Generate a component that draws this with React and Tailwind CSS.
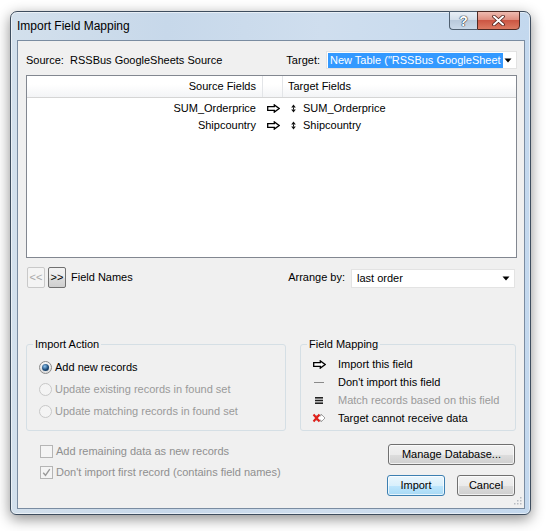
import React from 'react';

const ui = "font-['Liberation_Sans',Arial,sans-serif]";

const MapArrow = ({ stroke = '#000' }) => (
  <svg width="13" height="9" viewBox="0 0 13 9">
    <path d="M0.7 2.7H7.3V0.9L12.2 4.5L7.3 8.1V6.3H0.7Z" fill="white" stroke={stroke} strokeWidth="1.3" />
  </svg>
);

const UpDown = () => (
  <svg width="5" height="9" viewBox="0 0 5 9">
    <path d="M2.5 0.5L4.8 3.6H0.2Z M2.5 8.5L0.2 5.4H4.8Z" fill="#111" />
    <path d="M2.5 3.4V5.6" stroke="#111" strokeWidth="1" />
  </svg>
);

const DropArrow = () => (
  <svg width="8" height="5" viewBox="0 0 8 5">
    <path d="M0.5 0.5H7.5L4 4.5Z" fill="#000" />
  </svg>
);

const Radio = ({ checked, disabled, label }) => (
  <div className="flex items-center h-[22px]">
    <span
      className={`w-[13px] h-[13px] rounded-full border flex items-center justify-center ${
        disabled ? 'border-[#c8c8c8] bg-[#f4f4f4]' : 'border-[#8b8b8b] bg-gradient-to-b from-[#f6f6f6] to-[#dcdcdc]'
      }`}
    >
      {checked && (
        <span className="w-[7px] h-[7px] rounded-full bg-[radial-gradient(circle_at_40%_35%,#8ec4f0,#1b4a78_55%,#0c2a48)]" />
      )}
    </span>
    <span className={`ml-[3px] ${disabled ? 'text-[#9a9a9a]' : 'text-black'}`}>{label}</span>
  </div>
);

const Check = ({ checked, label }) => (
  <div className="flex items-center h-[21px]">
    <span className="w-[13px] h-[13px] border border-[#b5b5b5] bg-[#f4f4f4] flex items-center justify-center">
      {checked && (
        <svg width="9" height="9" viewBox="0 0 9 9">
          <path d="M1.2 4.8L3.5 7.3L7.8 1.2" fill="none" stroke="#9a9a9a" strokeWidth="1.4" />
        </svg>
      )}
    </span>
    <span className="ml-[3px] text-[#8f8f8f]">{label}</span>
  </div>
);

const WinButton = ({ children, width, primary }) => (
  <button
    className={`h-[21px] ${width} rounded-[3px] border text-black text-[11px] ${ui} ${
      primary
        ? 'border-[#3c7fb1] bg-[linear-gradient(#eaf6fd_0%,#d9f0fc_50%,#bee6fd_51%,#a7d9f5_100%)] shadow-[inset_0_0_0_1px_rgba(255,255,255,0.7)]'
        : 'border-[#707070] bg-[linear-gradient(#f2f2f2_0%,#ebebeb_50%,#dddddd_51%,#cfcfcf_100%)] shadow-[inset_0_0_0_1px_rgba(255,255,255,0.7)]'
    }`}
  >
    {children}
  </button>
);

const LegendRow = ({ icon, label, dim }) => (
  <div className="flex items-center h-[18px]">
    <span className="w-[14px] flex justify-center">{icon}</span>
    <span className={`ml-[12px] ${dim ? 'text-[#9a9a9a]' : 'text-black'}`}>{label}</span>
  </div>
);

const rows = ['SUM_Orderprice', 'Shipcountry'];

export default function App() {
  return (
    <div className={`w-[550px] h-[531px] bg-white pl-[10px] pt-[11px] text-[11px] ${ui}`}>
      <div className="w-[521px] h-[504px] flex flex-col rounded-t-[7px] rounded-b-[6px] border border-[#3e4d5e] bg-[linear-gradient(90deg,#d3e0ec_0%,#c7d8ea_30%,#cfdeee_60%,#c3d8ee_100%)] shadow-[inset_0_0_0_1px_rgba(255,255,255,0.55),0_4px_14px_rgba(0,0,0,0.45)]">
        {/* title bar */}
        <div className="h-[28px] flex shrink-0">
          <span className="self-center ml-[6px] text-[12px] text-black">Import Field Mapping</span>
          <div className="ml-auto mr-[10px] mt-[-1px] flex self-start">
            <div className="w-[28px] h-[19px] rounded-bl-[4px] border border-[#4f5f70] border-r-0 bg-[linear-gradient(#e9eff6_0%,#d4dfeb_45%,#b9c9db_50%,#c9d8e8_100%)] flex items-center justify-center">
              <span className="text-white font-bold text-[14px] leading-none [text-shadow:0_0_1px_#1f2b38,0_0_1px_#1f2b38,0_0_1px_#1f2b38]">?</span>
            </div>
            <div className="w-[43px] h-[19px] rounded-br-[4px] border border-[#4f2a24] bg-[linear-gradient(#eebbb0_0%,#df8f80_45%,#cc5643_50%,#dc7a62_100%)] flex items-center justify-center">
              <svg width="13" height="11" viewBox="0 0 13 11">
                <path d="M2 1.5L11 9.5M11 1.5L2 9.5" stroke="#4a1d17" strokeWidth="3.6" strokeLinecap="round" />
                <path d="M2 1.5L11 9.5M11 1.5L2 9.5" stroke="white" strokeWidth="2" strokeLinecap="round" />
              </svg>
            </div>
          </div>
        </div>

        {/* client area */}
        <div className="relative flex-1 ml-[6px] mr-[5px] mb-[5px] border border-[#7a8ca1] bg-[#f0f0f0] flex flex-col">
          <div className="px-[7px] pt-[10px]">
            <div className="flex items-center h-[18px]">
              <span className="ml-px">Source:&nbsp; RSSBus GoogleSheets Source</span>
              <span className="ml-auto">Target:</span>
              <div className="ml-[6px] w-[191px] h-[18px] bg-white border border-[#e2e2e2] flex items-center pl-px pr-[4px]">
                <span className="h-[15px] bg-[#3399ff] text-white whitespace-nowrap leading-[15px] px-[2px]">
                  New Table ("RSSBus GoogleSheet
                </span>
                <span className="ml-auto"><DropArrow /></span>
              </div>
            </div>

            {/* list */}
            <div className="mt-[6px] ml-px h-[183px] border border-[#828790] bg-white flex flex-col">
              <div className="h-[22px] flex border-b border-[#d5d5d5] bg-[linear-gradient(#ffffff_0%,#ffffff_40%,#f3f4f6_100%)]">
                <div className="w-[236px] flex items-center justify-end pr-[6px] border-r border-[#e3e5e8]">Source Fields</div>
                <div className="w-[20px] border-r border-[#e3e5e8]" />
                <div className="flex-1 flex items-center pl-[5px]">Target Fields</div>
              </div>
              <div className="pt-[2px]">
                {rows.map((r) => (
                  <div key={r} className="h-[17px] flex items-center">
                    <div className="w-[236px] text-right pr-[7px]">{r}</div>
                    <div className="w-[21px] flex justify-center"><MapArrow /></div>
                    <div className="flex items-center pl-[7px]">
                      <UpDown />
                      <span className="ml-[7px]">{r}</span>
                    </div>
                  </div>
                ))}
              </div>
            </div>

            {/* field names row */}
            <div className="mt-[9px] flex items-center h-[21px]">
              <div className="ml-[2px] w-[18px] h-[21px] rounded-[2px] border border-[#c9c9c9] bg-[#f4f4f4] text-[#a8a8a8] flex items-center justify-center leading-none">&lt;&lt;</div>
              <div className="ml-[3px] w-[18px] h-[21px] rounded-[2px] border border-[#707070] bg-[linear-gradient(#f2f2f2_0%,#ebebeb_50%,#dddddd_51%,#cfcfcf_100%)] flex items-center justify-center leading-none">&gt;&gt;</div>
              <span className="ml-[5px]">Field Names</span>
              <span className="ml-auto">Arrange by:</span>
              <div className="ml-[6px] mr-[2px] mt-[2px] w-[164px] h-[19px] bg-white border border-[#e3e3e3] flex items-center pl-[5px] pr-[4px]">
                <span>last order</span>
                <span className="ml-auto"><DropArrow /></span>
              </div>
            </div>
          </div>

          {/* groups */}
          <div className="mt-[49px] px-[8px] flex gap-[14px]">
            <fieldset className="w-[260px] h-[94px] rounded-[3px] border border-[#d5dfe5] pl-[12px]">
              <legend className="ml-[-6px] px-[2px] leading-[14px]">Import Action</legend>
              <div className="pt-[5px]">
                <Radio checked label="Add new records" />
                <Radio disabled label="Update existing records in found set" />
                <Radio disabled label="Update matching records in found set" />
              </div>
            </fieldset>
            <fieldset className="flex-1 h-[94px] rounded-[3px] border border-[#d5dfe5] pl-[11px]">
              <legend className="ml-[-5px] px-[2px] leading-[14px]">Field Mapping</legend>
              <div className="pt-[4px]">
                <LegendRow icon={<MapArrow />} label="Import this field" />
                <LegendRow icon={<span className="block w-[10px] h-px bg-[#8a8a8a]" />} label="Don't import this field" />
                <LegendRow
                  icon={
                    <svg width="8" height="7" viewBox="0 0 8 7">
                      <rect x="0" y="0" width="8" height="1.6" fill="#222" />
                      <rect x="0" y="2.7" width="8" height="1.6" fill="#222" />
                      <rect x="0" y="5.4" width="8" height="1.6" fill="#222" />
                    </svg>
                  }
                  label="Match records based on this field"
                  dim
                />
                <LegendRow
                  icon={
                    <svg width="14" height="10" viewBox="0 0 14 10">
                      <path d="M4 2.8H9V1L13 5L9 9V7.2H4Z" fill="white" stroke="#a0a0a0" strokeWidth="1" />
                      <path d="M1.5 1.5L7.5 8.5M7.5 1.5L1.5 8.5" stroke="#e0201a" strokeWidth="2" />
                    </svg>
                  }
                  label="Target cannot receive data"
                />
              </div>
            </fieldset>
          </div>

          {/* bottom */}
          <div className="mt-[10px] flex">
            <div className="pl-[22px]">
              <Check label="Add remaining data as new records" />
              <Check checked label="Don't import first record (contains field names)" />
            </div>
            <div className="ml-auto mr-[9px] pt-[3px] flex flex-col items-end gap-[10px]">
              <WinButton width="w-[127px]">Manage Database...</WinButton>
              <div className="flex gap-[12px]">
                <WinButton width="w-[58px]" primary>Import</WinButton>
                <WinButton width="w-[58px]">Cancel</WinButton>
              </div>
            </div>
          </div>

          {/* size grip */}
          <svg className="absolute right-[2px] bottom-[3px]" width="9" height="9" viewBox="0 0 9 9">
            <rect x="7" y="1" width="1.5" height="1.5" fill="#b8bcc2" />
            <rect x="4" y="4" width="1.5" height="1.5" fill="#b8bcc2" />
            <rect x="7" y="4" width="1.5" height="1.5" fill="#b8bcc2" />
            <rect x="1" y="7" width="1.5" height="1.5" fill="#b8bcc2" />
            <rect x="4" y="7" width="1.5" height="1.5" fill="#b8bcc2" />
            <rect x="7" y="7" width="1.5" height="1.5" fill="#b8bcc2" />
          </svg>
        </div>
      </div>
    </div>
  );
}
